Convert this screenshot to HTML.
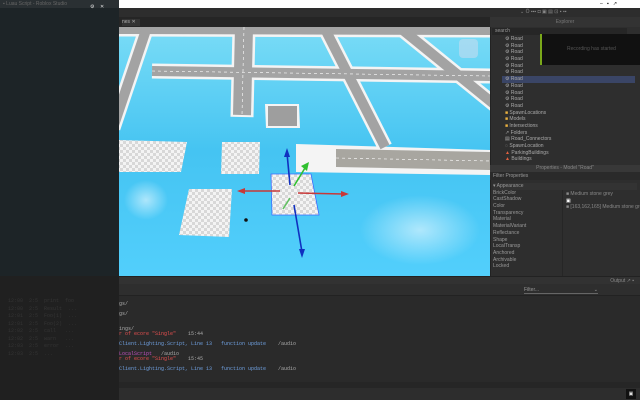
<!DOCTYPE html><html><head><style>
*{margin:0;padding:0;box-sizing:border-box}
body{width:640px;height:400px;overflow:hidden;background:#2b2b2b;font-family:"Liberation Sans",sans-serif;font-size:5px;color:#999;position:relative}
.a{position:absolute}
.row{height:6.7px;line-height:6.7px;white-space:nowrap}
.o{position:absolute;left:119px;font-family:'Liberation Mono',monospace;font-size:5px;line-height:6px;white-space:nowrap;color:#aaa}
</style></head><body>
<div class="a" style="left:0;top:0;width:640px;height:8px;background:#fff"></div>
<div class="a" style="left:0;top:8px;width:640px;height:9px;background:#2d2d2d"></div>
<div class="a" style="left:0;top:17px;width:640px;height:10px;background:#252525"></div>
<div class="a" style="left:122px;top:19px;width:18px;height:7px;background:#333;color:#aaa;line-height:7px">nes ✕</div>
<div class="a" style="left:520px;top:9px;color:#888;line-height:7px;white-space:nowrap">⌄ Ö ▪▪▪ ◘ ▣ ▤ ⊡ ▪ ▪▪</div>
<div class="a" style="left:600px;top:1px;color:#000;line-height:6px;white-space:nowrap">‒ &nbsp; ▪ &nbsp; ↗</div>
<!-- viewport -->
<svg class="a" style="left:119px;top:27px" width="371" height="249" viewBox="119 27 371 249">
<defs><linearGradient id="g" x1="0" y1="0" x2="0" y2="1"><stop offset="0" stop-color="#7adcf6"/><stop offset=".5" stop-color="#45c4f2"/><stop offset="1" stop-color="#52cffc"/></linearGradient>
<pattern id="c" width="6" height="6" patternUnits="userSpaceOnUse"><rect width="6" height="6" fill="#f4f4f4"/><rect width="3" height="3" fill="#d8d8d8"/><rect x="3" y="3" width="3" height="3" fill="#d8d8d8"/></pattern>
<radialGradient id="w"><stop offset="0" stop-color="#fff" stop-opacity=".55"/><stop offset="1" stop-color="#fff" stop-opacity="0"/></radialGradient></defs>
<rect x="119" y="27" width="371" height="249" fill="url(#g)"/>
<ellipse cx="420" cy="230" rx="60" ry="35" fill="url(#w)"/>
<ellipse cx="146" cy="200" rx="22" ry="20" fill="url(#w)"/>
<g stroke="#f4f4f4" stroke-width="15" fill="none">
<line x1="119" y1="29" x2="490" y2="30"/>
<line x1="152" y1="71" x2="490" y2="76"/>
<line x1="147" y1="27" x2="113" y2="128"/>
<line x1="324" y1="27" x2="385" y2="147"/>
<line x1="399" y1="27" x2="495" y2="105"/>
</g>
<line x1="244" y1="27" x2="242" y2="117" stroke="#f4f4f4" stroke-width="23"/>
<polygon points="296,144 490,150 490,175 296,172" fill="#f4f4f4"/>
<g stroke="#a3a3a3" stroke-width="10" fill="none">
<line x1="119" y1="29" x2="490" y2="30"/>
<line x1="152" y1="71" x2="490" y2="76"/>
<line x1="147" y1="27" x2="113" y2="128"/>
<line x1="324" y1="27" x2="385" y2="147"/>
<line x1="399" y1="27" x2="495" y2="105"/>
</g>
<line x1="244" y1="27" x2="242" y2="115" stroke="#a3a3a3" stroke-width="18"/>
<polygon points="336,149 490,152 490,170 336,167" fill="#a8a6a0"/>
<g stroke="#fff" stroke-width=".6" stroke-dasharray="3 3" fill="none">
<line x1="152" y1="71" x2="490" y2="76"/><line x1="244" y1="27" x2="242" y2="115"/><line x1="336" y1="158" x2="490" y2="161"/></g>
<polygon points="265,104 299,104 300,128 266,128" fill="#f4f4f4"/>
<rect x="268" y="106" width="29" height="20" fill="#9e9e9e"/>
<polygon points="119,140 187,142 181,172 119,172" fill="url(#c)"/>
<polygon points="222,142 260,142 259,174 221,174" fill="url(#c)"/>
<polygon points="189,189 232,189 229,237 179,235" fill="url(#c)"/>
<polygon points="271,174 311,174 319,215 272,215" fill="url(#c)" stroke="#3a6cff" stroke-width=".8"/>
<rect x="459" y="39" width="19" height="19" rx="4" fill="#cde" opacity=".55"/>
<g stroke-width="1.6"><line x1="290" y1="185" x2="287" y2="153" stroke="#1030c0"/><line x1="294" y1="205" x2="302" y2="252" stroke="#1030c0"/>
<line x1="280" y1="191" x2="243" y2="191" stroke="#c83838"/><line x1="298" y1="193" x2="343" y2="194" stroke="#c83838"/>
<line x1="294" y1="186" x2="305" y2="168" stroke="#30c030"/><line x1="290" y1="198" x2="283" y2="209" stroke="#60c060"/></g>
<polygon points="287,148 284,157 290,157" fill="#1030c0"/><polygon points="302,258 299,249 305,249" fill="#1030c0"/>
<polygon points="237,191 245,188 245,194" fill="#c83838"/><polygon points="349,194 341,191 341,197" fill="#c83838"/>
<polygon points="309,162 301,166 307,171" fill="#30c030"/>
<circle cx="246" cy="220" r="1.8" fill="#111"/>
</svg>
<!-- right panel -->
<div class="a" style="left:490px;top:17px;width:150px;height:259px;background:#2e2e2e;border-left:1px solid #222"></div>
<div class="a" style="left:490px;top:17px;width:150px;height:10px;background:#333;text-align:center;line-height:10px;color:#777">Explorer</div>
<div class="a" style="left:492px;top:28px;width:135px;height:7px;background:#262626;color:#999;line-height:7px;padding-left:3px">search</div>
<div class="a" style="left:505px;top:36px;width:128px;color:#aaa">
<div class="row">⚙ Road</div><div class="row">⚙ Road</div><div class="row">⚙ Road</div><div class="row">⚙ Road</div><div class="row">⚙ Road</div><div class="row">⚙ Road</div>
<div class="row" style="background:#3a4566;margin-left:-3px;padding-left:3px;margin-right:-2px">⚙ Road</div>
<div class="row">⚙ Road</div><div class="row">⚙ Road</div><div class="row">⚙ Road</div><div class="row">⚙ Road</div>
<div class="row"><span style="color:#e8b040">■</span> SpawnLocations</div><div class="row"><span style="color:#e8b040">■</span> Models</div><div class="row"><span style="color:#e8b040">■</span> Intersections</div><div class="row">↗ Folders</div><div class="row">▤ Road_Connectors</div><div class="row">◌ SpawnLocation</div><div class="row"><span style="color:#e06040">▲</span> ParkingBuildings</div><div class="row"><span style="color:#e06040">▲</span> Buildings</div>
</div>
<div class="a" style="left:540px;top:34px;width:100px;height:31px;background:#111;border-left:2px solid #7aa81a;color:#555;line-height:31px;padding-left:25px;white-space:nowrap">Recording has started</div>
<div class="a" style="left:490px;top:165px;width:150px;height:7px;background:#383838;text-align:center;line-height:7px;color:#888">Properties - Model "Road"</div>
<div class="a" style="left:490px;top:172px;width:150px;height:8px;background:#2a2a2a;line-height:8px;padding-left:3px">Filter Properties</div>
<div class="a" style="left:493px;top:183px;width:144px">
<div class="row" style="background:#333">▾ Appearance</div>
<div class="row">BrickColor</div><div class="row">CastShadow</div><div class="row">Color</div><div class="row">Transparency</div><div class="row">Material</div><div class="row">MaterialVariant</div><div class="row">Reflectance</div><div class="row">Shape</div><div class="row">LocalTransp</div><div class="row">Anchored</div><div class="row">Archivable</div><div class="row">Locked</div>
</div>
<div class="a" style="left:562px;top:190px;width:1px;height:86px;background:#262626"></div>
<div class="a" style="left:566px;top:191px;color:#888;line-height:6.7px;white-space:nowrap">■ Medium stone grey<br><span style="color:#fff">▣</span><br>■ [163,162,165] Medium stone grey</div>
<!-- left overlay -->
<div class="a" style="left:0;top:0;width:119px;height:276px;background:#1d2427"></div>
<div class="a" style="left:0;top:0;width:119px;height:8px;background:#2a3033;color:#666;line-height:8px;padding-left:3px;white-space:nowrap">▪ Luau Script - Roblox Studio</div>
<div class="a" style="left:90px;top:3px;color:#ddd;line-height:8px;white-space:nowrap">⚙ &nbsp;&nbsp; ✕</div>
<!-- bottom -->
<div class="a" style="left:119px;top:276px;width:521px;height:8px;background:#323232;border-top:1px solid #222;text-align:right;color:#888;line-height:8px;padding-right:6px">Output ↗ ▪</div>
<div class="a" style="left:119px;top:284px;width:521px;height:12px;background:#2e2e2e;border-bottom:1px solid #222"></div>
<div class="a" style="left:524px;top:287px;width:74px;height:7px;border-bottom:1px solid #666;color:#999;line-height:6px">Filter... <span style="float:right">⌄</span></div>
<div class="a" style="left:119px;top:296px;width:521px;height:86px;background:#2a2a2a"></div>
<div class="o" style="top:301px">gs/</div>
<div class="o" style="top:311px">gs/</div>
<div class="o" style="top:326px">ings/</div>
<div class="o" style="top:331px"><span style="color:#e85050">r of ecore "Single"</span> &nbsp;&nbsp; 15:44</div>
<div class="o" style="top:341px;color:#6fa0e0">Client.Lighting.Script, Line 13 &nbsp; function update &nbsp;&nbsp; <span style="color:#aaa">/audio</span></div>
<div class="o" style="top:351px"><span style="color:#c050c0">LocalScript</span> &nbsp; /audio</div>
<div class="o" style="top:356px"><span style="color:#e85050">r of ecore "Single"</span> &nbsp;&nbsp; 15:45</div>
<div class="o" style="top:366px;color:#6fa0e0">Client.Lighting.Script, Line 13 &nbsp; function update &nbsp;&nbsp; <span style="color:#aaa">/audio</span></div>
<div class="a" style="left:0;top:276px;width:119px;height:124px;background:#202020"></div>
<div class="a" style="left:0;top:296px;width:119px;height:86px;font-family:'Liberation Mono',monospace;color:#353535;line-height:7.5px;padding:2px 0 0 8px;white-space:pre">12:00  2:5  print  foo
12:00  2:5  Result  ...
12:01  2:5  Foo(1)  ...
12:01  2:5  Foo(2)  ...
12:02  2:5  call   ...
12:02  2:5  warn   ...
12:03  2:5  error  ...
12:03  2:5  ...</div>
<div class="a" style="left:119px;top:382px;width:521px;height:6px;background:#262626"></div>
<div class="a" style="left:119px;top:388px;width:521px;height:12px;background:#2d2d2d"></div>
<div class="a" style="left:626px;top:389px;width:10px;height:10px;background:#111;color:#ddd;text-align:center;line-height:10px">▣</div>
</body></html>
